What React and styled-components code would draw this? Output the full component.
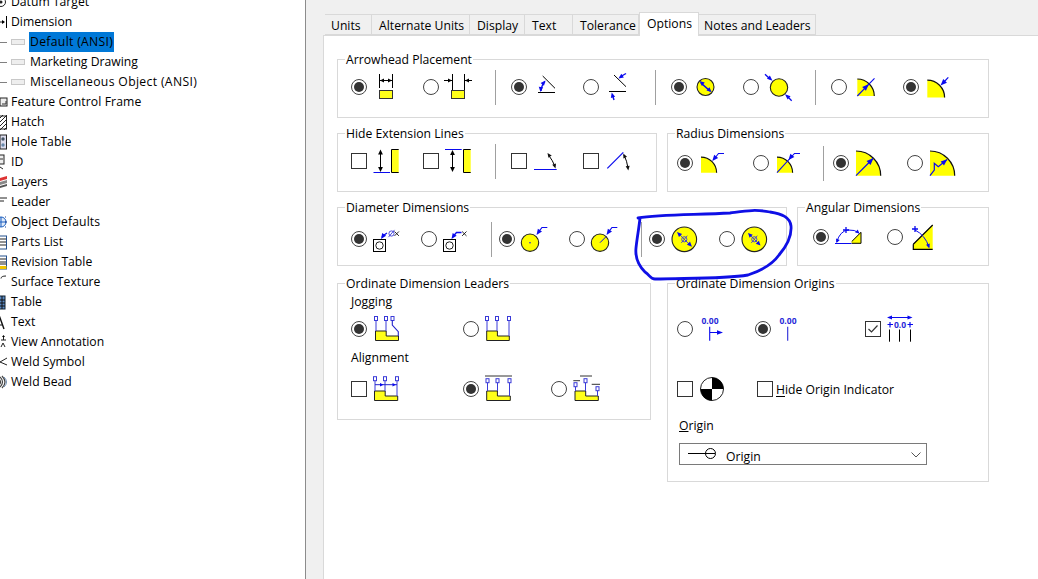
import React from "react"
import styled, { createGlobalStyle } from "styled-components"

const BLUE = "#0a0aee"
const YELLOW = "#ffff1a"

const GlobalStyle = createGlobalStyle`
    html, body {
        margin: 0;
        height: 100%;
        overflow: hidden;
        background: #fff;
    }
    body {
        font-family: "Open Sans", "Liberation Sans", sans-serif;
        font-size: 12.2px;
        color: #000;
    }
`;

const Page = styled.div`
    position: relative;
    display: flex;
    width: 1038px;
    height: 579px;
    overflow: hidden;
`;

/* ---------- left tree ---------- */

const Tree = styled.div`
    width: 305px;
    flex-shrink: 0;
    margin-top: -8px;
    margin-bottom: -8px;
    border-right: 1px solid #8c8c8c;
    box-sizing: content-box;
`;

const TreeRow = styled.div`
    display: flex;
    align-items: center;
    height: 20px;
    white-space: nowrap;
`;

const TreeGlyph = styled.svg`
    width: 8px;
    height: 20px;
    margin-right: 2px;
    flex-shrink: 0;
    overflow: hidden;
`;

const SubDash = styled.span`
    width: 7px;
    height: 1px;
    background: #808080;
    margin-right: 4px;
`;

const SubBox = styled.span`
    width: 14px;
    height: 6px;
    box-sizing: border-box;
    background: #eeeeee;
    border: 1px solid #c8c8c8;
    margin-right: 4px;
`;

const TreeLabel = styled.span`
    height: 20px;
    line-height: 20px;
    padding: 0 1px;
    letter-spacing: ${p => p.$track || 0}px;
    background: ${p => (p.$selected ? "#0078d7" : "transparent")};
`;

const treeIcons = {
    "Datum Target": <><circle cx="1" cy="10" r="4.5" fill="none" stroke="#222" /><circle cx="1" cy="10" r="1.5" fill="#222" /></>,
    Dimension: <><path d="M0 10H4" stroke="#222" /><path d="M2 8L5 10L2 12Z" fill="#000" /><path d="M6.5 4V16" stroke="#000" /></>,
    "Feature Control Frame": <><rect x="0" y="6" width="7" height="8" fill="#eee" stroke="#222" /><path d="M2 12H6V9" stroke="#333" fill="none" /></>,
    Hatch: <><rect x="-1" y="4" width="7.5" height="13" fill="#fff" stroke="#222" /><path d="M-2 8L3 3M-2 12L7 3M-2 16L7 7M0 18L7 11M4 18L7 15" stroke="#222" /></>,
    "Hole Table": <><rect x="0" y="3" width="6.5" height="14" fill="#dde" stroke="#222" /><circle cx="3" cy="7" r="1.7" fill="#456" /><circle cx="3" cy="13" r="1.7" fill="#68a" /></>,
    ID: <><rect x="-1" y="3" width="5" height="9" fill="#eee" stroke="#222" /><path d="M0 15L3 17" stroke="#222" /><path d="M0 7H3" stroke="#333" /></>,
    Layers: <><path d="M0 6L7 4V7L0 9Z" fill="#d33" /><path d="M0 10L7 8V11L0 13Z" fill="#888" /><path d="M0 14L7 12V14L0 16Z" fill="#555" /></>,
    Leader: <><path d="M0 6H7M0 9H4" stroke="#222" /></>,
    "Object Defaults": <><circle cx="1" cy="10" r="5" fill="#dfe9f8" stroke="#1a5fc0" /><path d="M-4 10H6M1 5V15" stroke="#1a5fc0" /><path d="M5.5 4.5V5.5M6 9V11M5.5 14.5V15.5" stroke="#1a3f90" /></>,
    "Parts List": <><rect x="-1" y="4" width="7.5" height="13" fill="#fff" stroke="#24508c" /><path d="M0 7H6M0 10H6M0 13H6" stroke="#222" /></>,
    "Revision Table": <><rect x="-1" y="4" width="7.5" height="13" fill="#fff" stroke="#24508c" /><path d="M0 7H6M0 10H6M0 12H6" stroke="#222" /><rect x="-1" y="14" width="7.5" height="3" fill="#f2c500" /></>,
    "Surface Texture": <><path d="M1 6.5Q1 4 6 4" stroke="#222" fill="none" /></>,
    Table: <><rect x="-1" y="4" width="6" height="13" fill="#5b8ac4" stroke="#123" /><path d="M-1 8H5M-1 11H5M-1 14H5M2 4V17" stroke="#111" /></>,
    Text: <><path d="M-1 3L4 17" stroke="#111" strokeWidth="1.4" /><path d="M-2 13H2" stroke="#111" /></>,
    "View Annotation": <><path d="M1 8H6M3.5 8V4" stroke="#222" /><path d="M2 5L3.5 3L5 5Z" fill="#000" /><path d="M1 15L3 11L5 15" stroke="#222" fill="none" /></>,
    "Weld Symbol": <><path d="M0 10L7 6M0 10L7 13" stroke="#222" /></>,
    "Weld Bead": <><path d="M0 5Q5 10 0 15M2 4Q8 10 2 16M-1 7Q2 10 -1 13" stroke="#444" strokeWidth="1.2" fill="none" /><path d="M4 5Q9 10 4 15" stroke="#6a8ab0" fill="none" /></>,
};

const treeItems = [
    { name: "Datum Target" },
    { name: "Dimension" },
    { name: "Default (ANSI)", sub: true, selected: true, track: 0.32 },
    { name: "Marketing Drawing", sub: true },
    { name: "Miscellaneous Object (ANSI)", sub: true, track: 0.34 },
    { name: "Feature Control Frame", track: 0.1 },
    { name: "Hatch" },
    { name: "Hole Table" },
    { name: "ID" },
    { name: "Layers" },
    { name: "Leader" },
    { name: "Object Defaults", track: 0.12 },
    { name: "Parts List" },
    { name: "Revision Table" },
    { name: "Surface Texture" },
    { name: "Table" },
    { name: "Text" },
    { name: "View Annotation" },
    { name: "Weld Symbol" },
    { name: "Weld Bead" },
];

/* ---------- dialog shell ---------- */

const Dialog = styled.div`
    flex: 1;
    display: flex;
    flex-direction: column;
    background: #f0f0f0;
`;

const TabStrip = styled.div`
    display: flex;
    align-items: flex-end;
    height: 35px;
    padding-left: 19px;
    flex-shrink: 0;
`;

const Tab = styled.div`
    width: ${p => p.$w}px;
    height: ${p => (p.$active ? 24 : 21)}px;
    box-sizing: border-box;
    display: flex;
    align-items: center;
    white-space: nowrap;
    border: 1px solid #d9d9d9;
    border-bottom: ${p => (p.$active ? "none" : "1px solid #d9d9d9")};
    border-left: ${p => (p.$active ? "1px solid #d9d9d9" : "none")};
    background: ${p => (p.$active ? "#fff" : "#f0f0f0")};
    position: relative;
    z-index: ${p => (p.$active ? 1 : 0)};
    margin-bottom: ${p => (p.$active ? -1 : 0)}px;
    padding: ${p => (p.$active ? "0 0 3px" : "1px 0 0")} ${p => p.$pad}px;
    padding-right: 0;
`;

const Panel = styled.div`
    flex: 1;
    margin-left: 17px;
    background: #fff;
    border-top: 1px solid #d9d9d9;
    border-left: 1px solid #d9d9d9;
    padding: 23px 0 0 13px;
    display: flex;
    flex-direction: column;
    gap: 15px;
`;

const GroupRow = styled.div`
    display: flex;
    align-items: flex-start;
    gap: ${p => p.$gap || 10}px;
    margin-top: ${p => p.$mt || 0}px;
`;

const Group = styled.div`
    position: relative;
    box-sizing: border-box;
    width: ${p => p.$w}px;
    height: ${p => p.$h || 59}px;
    border: 1px solid #d9d9d9;
    padding: ${p => p.$pt}px 0 0 ${p => p.$pl}px;
`;

const Legend = styled.span`
    position: absolute;
    top: -8px;
    left: 7px;
    padding: 0 1px;
    line-height: 16px;
    background: #fff;
    white-space: nowrap;
`;

const Row = styled.div`
    display: flex;
    align-items: center;
    height: 20px;
    margin-top: ${p => p.$mt || 0}px;
`;

const Option = styled.div`
    display: flex;
    align-items: center;
    width: ${p => p.$w}px;
    height: 20px;
    flex-shrink: 0;
`;

const Divider = styled.span`
    width: 1px;
    height: 35px;
    background: #a0a0a0;
    margin-right: ${p => p.$mr}px;
    flex-shrink: 0;
`;

const Radio = styled.span`
    position: relative;
    width: 16px;
    height: 16px;
    box-sizing: border-box;
    flex-shrink: 0;
    border-radius: 50%;
    border: 1px solid #444;
    background: #fff;
    &::after {
        content: "";
        display: ${p => (p.$on ? "block" : "none")};
        position: absolute;
        inset: 2px;
        border-radius: 50%;
        background: #333;
    }
`;

const Box = styled.span`
    display: flex;
    width: 16px;
    height: 16px;
    box-sizing: border-box;
    flex-shrink: 0;
    border: 1px solid #333;
    background: #fff;
`;

const Tick = styled.svg`
    width: 14px;
    height: 14px;
`;

const Glyph = styled.svg`
    width: 50px;
    height: 40px;
    margin-left: 4px;
    flex-shrink: 0;
    overflow: visible;
`;

const SubLabel = styled.div`
    line-height: 16px;
    margin-top: ${p => p.$mt || 0}px;
`;

const HideLabel = styled.span`
    margin-left: 3px;
    white-space: nowrap;
    & u {
        text-underline-offset: 2px;
    }
`;

const OriginLabel = styled.div`
    line-height: 16px;
    margin: 19px 0 0 2px;
`;

const Combo = styled.div`
    display: flex;
    align-items: flex-start;
    width: 248px;
    height: 22px;
    box-sizing: border-box;
    margin: 9px 0 0 2px;
    border: 1px solid #7a7a7a;
    overflow: hidden;
    position: relative;
`;

const ComboIcon = styled.svg`
    width: 30px;
    height: 20px;
    margin-left: 8px;
    flex-shrink: 0;
`;

const ComboText = styled.span`
    margin-left: 8px;
    line-height: 20px;
    padding-top: 3px;
`;

const Caret = styled.svg`
    width: 10px;
    height: 6px;
    margin: 8px 5px 0 auto;
    flex-shrink: 0;
`;

const Scribble = styled.svg`
    position: absolute;
    left: 0;
    top: 0;
    width: 1038px;
    height: 579px;
    pointer-events: none;
    z-index: 2;
`;

/* ---------- drawing helpers, coordinates are page pixels ---------- */

const Icon = ({ cx, cy, children }) => (
    <Glyph viewBox={`${cx + 12} ${cy - 20} 50 40`}>{children}</Glyph>
);

const Head = ({ x, y, a, c = BLUE, l = 5, w = 2.2 }) => (
    <polygon
        points={`0,0 ${-l},${-w} ${-l},${w}`}
        fill={c}
        transform={`translate(${x} ${y}) rotate(${a})`}
    />
);

const Ln = ({ d, c = "#000", w = 1 }) => <path d={d} stroke={c} strokeWidth={w} fill="none" />;

const Quarter = ({ x, y, r }) => (
    <>
        <path d={`M${x} ${y - r}A${r} ${r} 0 0 1 ${x + r} ${y}H${x}Z`} fill="#ffff00" />
        <path d={`M${x} ${y - r}A${r} ${r} 0 0 1 ${x + r} ${y}`} stroke="#111" strokeWidth="1.2" fill="none" />
    </>
);

const Disc = ({ x, y, r }) => <circle cx={x} cy={y} r={r} fill="#ffff00" stroke="#222" strokeWidth="1.1" />;

const Step = ({ x, y, w, s = 10.7 }) => (
    <path
        d={`M${x} ${y}H${x + s}V${y + 5}H${x + w}V${y + 9.5}H${x}Z`}
        fill={YELLOW}
        stroke="#222"
        strokeWidth="1"
    />
);

const Stem = ({ x, top, bottom }) => (
    <>
        <rect x={x - 1.5} y={top} width="3" height="4" fill="#fff" stroke="#3a3ad8" />
        <Ln d={`M${x} ${top + 4}V${bottom}`} c="#3a3ad8" />
    </>
);

const OrdText = ({ x, y, children, c = "#2a2ad8" }) => (
    <text x={x} y={y} fill={c} fontFamily="'Open Sans', sans-serif" fontSize="8.5" fontWeight="700">
        {children}
    </text>
);

const Slashed = ({ x, y }) => (
    <>
        <circle cx={x} cy={y} r="2.6" fill="none" stroke="#3a3ad8" strokeWidth=".9" />
        <Ln d={`M${x - 3} ${y + 3.6}L${x + 3} ${y - 3.6}`} c="#3a3ad8" w=".9" />
    </>
);

const Cross = ({ x, y }) => <Ln d={`M${x - 2.2} ${y - 2.2}L${x + 2.2} ${y + 2.2}M${x + 2.2} ${y - 2.2}L${x - 2.2} ${y + 2.2}`} c="#111" w=".9" />;

const tabs = [
    ["Units", 47, 6], ["Alternate Units", 98, 7], ["Display", 55, 7], ["Text", 48, 7],
    ["Tolerance", 66, 7], ["Options", 60, 7, true], ["Notes and Leaders", 117, 5],
];

const App = () => {
    return (
        <Page>
            <GlobalStyle />
            <Tree>
                {treeItems.map(item => (
                    <TreeRow key={item.name}>
                        {item.sub ? (
                            <>
                                <SubDash />
                                <SubBox />
                            </>
                        ) : (
                            <TreeGlyph viewBox="0 0 8 20">{treeIcons[item.name]}</TreeGlyph>
                        )}
                        <TreeLabel $selected={item.selected} $track={item.track}>{item.name}</TreeLabel>
                    </TreeRow>
                ))}
            </Tree>
            <Dialog>
                <TabStrip>
                    {tabs.map(([name, w, pad, active]) => (
                        <Tab key={name} $w={w} $pad={pad} $active={active}>{name}</Tab>
                    ))}
                </TabStrip>
                <Panel>
                    <Group $w={652} $pt={17} $pl={13}>
                        <Legend>Arrowhead Placement</Legend>
                        <Row>
                            <Option $w={72}>
                                <Radio $on />
                                <Icon cx={359} cy={87}>
                                    <Ln d="M379.5 74V88M392.5 74V88M380 80.5H392" />
                                    <Head x={380} y={80.5} a={180} c="#000" l={4} w={2} />
                                    <Head x={392} y={80.5} a={0} c="#000" l={4} w={2} />
                                    <rect x="379.5" y="90.5" width="13" height="8" fill={YELLOW} stroke="#333" />
                                </Icon>
                            </Option>
                            <Option $w={72}>
                                <Radio />
                                <Icon cx={431} cy={87}>
                                    <Ln d="M452.5 74V90M464.5 74V90M444 80.5H452M465 80.5H472" />
                                    <Head x={452} y={80.5} a={0} c="#000" l={4} w={2} />
                                    <Head x={465} y={80.5} a={180} c="#000" l={4} w={2} />
                                    <rect x="451.5" y="90.5" width="13" height="8" fill={YELLOW} stroke="#333" />
                                </Icon>
                            </Option>
                            <Divider $mr={15} />
                            <Option $w={72}>
                                <Radio $on />
                                <Icon cx={519} cy={87}>
                                    <Ln d="M538 92.5H555M542.7 76L555 88.3" />
                                    <Ln d="M541 91Q541.5 85 545 81.5" c={BLUE} w={1.4} />
                                    <Head x={540.5} y={92} a={95} l={5} />
                                    <Head x={545.5} y={80.5} a={-50} l={5} />
                                </Icon>
                            </Option>
                            <Option $w={72}>
                                <Radio />
                                <Icon cx={591} cy={87}>
                                    <Ln d="M609 91.5H626M614 75L626 86.7" />
                                    <Ln d="M626 73.5L620 77" c={BLUE} w={1.4} />
                                    <Ln d="M614 100L612.5 95" c={BLUE} w={1.4} />
                                    <Head x={618.5} y={78.5} a={145} l={5} />
                                    <Head x={611.7} y={92.5} a={-105} l={5} />
                                </Icon>
                            </Option>
                            <Divider $mr={15} />
                            <Option $w={72}>
                                <Radio $on />
                                <Icon cx={679} cy={87}>
                                    <Disc x={705.5} y={87} r={8.5} />
                                    <Ln d="M701 83L710 91" c={BLUE} w={1.6} />
                                    <Head x={699.5} y={81} a={220} l={5} />
                                    <Head x={711.7} y={92.3} a={42} l={5} />
                                </Icon>
                            </Option>
                            <Option $w={72}>
                                <Radio />
                                <Icon cx={751} cy={87}>
                                    <Disc x={779} y={87.5} r={8.7} />
                                    <Ln d="M765 74.3L770 79M791.7 100.7L787 96" c={BLUE} w={1.3} />
                                    <Head x={772.5} y={80.8} a={42} l={5.5} />
                                    <Head x={785} y={94.3} a={222} l={5.5} />
                                </Icon>
                            </Option>
                            <Divider $mr={15} />
                            <Option $w={72}>
                                <Radio />
                                <Icon cx={839} cy={87}>
                                    <Quarter x={857.3} y={96} r={17} />
                                    <Ln d="M857.3 96L874.5 78.3" c={BLUE} w={1.1} />
                                    <Head x={869} y={84} a={-45} l={7} w={2.6} />
                                </Icon>
                            </Option>
                            <Option $w={72}>
                                <Radio $on />
                                <Icon cx={911} cy={87}>
                                    <Quarter x={927.3} y={97.5} r={17.3} />
                                    <Ln d="M948.3 77.3L943 83" c={BLUE} w={1.2} />
                                    <Head x={940.5} y={85.5} a={135} l={6.5} w={2.6} />
                                </Icon>
                            </Option>
                        </Row>
                    </Group>

                    <GroupRow>
                        <Group $w={320} $pt={17} $pl={13}>
                            <Legend>Hide Extension Lines</Legend>
                            <Row>
                                <Option $w={72}>
                                    <Box />
                                    <Icon cx={359} cy={161}>
                                        <Ln d="M373.5 172.5H390" c={BLUE} />
                                        <Ln d="M380.5 151V171" />
                                        <Head x={380.5} y={149.5} a={-90} c="#000" l={5} w={2.4} />
                                        <Head x={380.5} y={172} a={90} c="#000" l={5} w={2.4} />
                                        <path d="M398.7 149.5H391.5V172.5H398.7Z" fill={YELLOW} />
                                        <Ln d="M398.7 149.5H391.5V172.5H398.7" />
                                    </Icon>
                                </Option>
                                <Option $w={72}>
                                    <Box />
                                    <Icon cx={431} cy={161}>
                                        <Ln d="M445 149.5H461.7" c={BLUE} />
                                        <Ln d="M452.5 151V171" />
                                        <Head x={452.5} y={150} a={-90} c="#000" l={5} w={2.4} />
                                        <Head x={452.5} y={172} a={90} c="#000" l={5} w={2.4} />
                                        <path d="M470.7 149.5H463.5V172.5H470.7Z" fill={YELLOW} />
                                        <Ln d="M470.7 149.5H463.5V172.5H470.7" />
                                    </Icon>
                                </Option>
                                <Divider $mr={15} />
                                <Option $w={72}>
                                    <Box />
                                    <Icon cx={519} cy={161}>
                                        <Ln d="M534 169.5H556.7" c={BLUE} />
                                        <Ln d="M548.5 155Q553 161 554.8 166" />
                                        <Head x={547.5} y={153} a={-125} c="#111" l={4.5} w={2} />
                                        <Head x={555.5} y={168.5} a={72} c="#111" l={4.5} w={2} />
                                    </Icon>
                                </Option>
                                <Option $w={72}>
                                    <Box />
                                    <Icon cx={591} cy={161}>
                                        <Ln d="M607.3 168.3L623.3 152.3" c={BLUE} w={1.2} />
                                        <Ln d="M624 155Q627 161 628 168" />
                                        <Head x={623.3} y={153.5} a={-115} c="#111" l={4.5} w={2} />
                                        <Head x={628.3} y={170.5} a={82} c="#111" l={4.5} w={2} />
                                    </Icon>
                                </Option>
                            </Row>
                        </Group>
                        <Group $w={322} $pt={19} $pl={9}>
                            <Legend>Radius Dimensions</Legend>
                            <Row>
                                <Option $w={76}>
                                    <Radio $on />
                                    <Icon cx={685} cy={163}>
                                        <Quarter x={701} y={172.7} r={15.6} />
                                        <Ln d="M724 153.5H718.5L714.5 158.5" c={BLUE} w={1.1} />
                                        <Head x={712.3} y={161} a={130} l={6} w={2.6} />
                                    </Icon>
                                </Option>
                                <Option $w={70}>
                                    <Radio />
                                    <Icon cx={761} cy={163}>
                                        <Quarter x={777} y={172.7} r={15.6} />
                                        <Ln d="M800 153.5H794.5L777 172.7" c={BLUE} w={1.1} />
                                        <Head x={788.5} y={160} a={130} l={6} w={2.6} />
                                    </Icon>
                                </Option>
                                <Divider $mr={9} />
                                <Option $w={74}>
                                    <Radio $on />
                                    <Icon cx={841} cy={163}>
                                        <Quarter x={856} y={175.7} r={24.7} />
                                        <Ln d="M856 175.7L873 158.5" c={BLUE} w={1.2} />
                                        <Head x={873.5} y={158} a={-45} l={7} w={2.8} />
                                    </Icon>
                                </Option>
                                <Option $w={70}>
                                    <Radio />
                                    <Icon cx={915} cy={163}>
                                        <Quarter x={930} y={175.7} r={24.7} />
                                        <Ln d="M930 175.7L934.3 170V163.3L938.3 166.7L947 159.5" c={BLUE} w={1.2} />
                                        <Head x={947.3} y={159.3} a={-40} l={6.5} w={2.6} />
                                    </Icon>
                                </Option>
                            </Row>
                        </Group>
                    </GroupRow>

                    <GroupRow>
                        <Group $w={450} $pt={21} $pl={13}>
                            <Legend>Diameter Dimensions</Legend>
                            <Row>
                                <Option $w={70}>
                                    <Radio $on />
                                    <Icon cx={359} cy={239}>
                                        <rect x="373.5" y="239.5" width="12" height="12" fill="#fff" stroke="#000" />
                                        <circle cx="379.5" cy="245.5" r="3.7" fill="#fff" stroke="#222" />
                                        <Ln d="M387 233Q383.5 235 382 237" c={BLUE} w={1.3} />
                                        <Head x={381} y={239} a={125} l={5.5} w={2.4} />
                                        <Slashed x={391.5} y={233.5} />
                                        <Cross x={396.7} y={233.7} />
                                    </Icon>
                                </Option>
                                <Option $w={70}>
                                    <Radio />
                                    <Icon cx={429} cy={239}>
                                        <rect x="443.5" y="239.5" width="12" height="12" fill="#fff" stroke="#000" />
                                        <circle cx="449.5" cy="245.5" r="3.7" fill="#fff" stroke="#222" />
                                        <Ln d="M461.5 232.5H456.5L453 236.5" c={BLUE} w={1.3} />
                                        <Head x={451.5} y={239} a={125} l={5.5} w={2.4} />
                                        <Cross x={464.3} y={233.7} />
                                    </Icon>
                                </Option>
                                <Divider $mr={7} />
                                <Option $w={70}>
                                    <Radio $on />
                                    <Icon cx={507} cy={239}>
                                        <Disc x={530} y={242.7} r={8.7} />
                                        <circle cx="530" cy="242.7" r=".8" fill={BLUE} />
                                        <Ln d="M547.3 227.5H542L538.5 232" c={BLUE} w={1.2} />
                                        <Head x={536.5} y={235} a={125} l={6} w={2.5} />
                                    </Icon>
                                </Option>
                                <Option $w={72}>
                                    <Radio />
                                    <Icon cx={577} cy={239}>
                                        <Disc x={600} y={242.7} r={8.7} />
                                        <Ln d="M600 242.7L606 236.7" c={BLUE} />
                                        <Ln d="M617.3 227.5H612L608.5 232" c={BLUE} w={1.2} />
                                        <Head x={606.5} y={235} a={125} l={6} w={2.5} />
                                    </Icon>
                                </Option>
                                <Divider $mr={7} />
                                <Option $w={70}>
                                    <Radio $on />
                                    <Icon cx={657} cy={239}>
                                        <Disc x={684.3} y={239.3} r={12.3} />
                                        <Ln d="M679 234L690 245" c="#3a3ad8" w={.9} />
                                        <Head x={677} y={232} a={225} l={5} />
                                        <Head x={692} y={246.7} a={45} l={5} />
                                        <Slashed x={684.3} y={239.3} />
                                    </Icon>
                                </Option>
                                <Option $w={60}>
                                    <Radio />
                                    <Icon cx={727} cy={239}>
                                        <Disc x={754.3} y={239.3} r={12.3} />
                                        <Ln d="M750 235L759 244" c="#3a3ad8" w={.9} />
                                        <Head x={748} y={233} a={225} l={4.5} />
                                        <Head x={760.5} y={245.5} a={45} l={4.5} />
                                        <Slashed x={754.3} y={239.3} />
                                    </Icon>
                                </Option>
                            </Row>
                        </Group>
                        <Group $w={192} $pt={19} $pl={15}>
                            <Legend>Angular Dimensions</Legend>
                            <Row>
                                <Option $w={74}>
                                    <Radio $on />
                                    <Icon cx={821} cy={237}>
                                        <path d="M851.7 243.3H861V232.3L851.7 241.6Z" fill="#ffff00" />
                                        <Ln d="M851.7 241.6L861 232.3V243.3H851.7" />
                                        <Ln d="M835 243.5H851.5" c={BLUE} />
                                        <Ln d="M836.7 242Q840 231 848 230Q855 229.5 859 233" c={BLUE} />
                                        <Ln d="M846 227V233M843 230H849" c={BLUE} w={1.3} />
                                        <Head x={836.5} y={243} a={110} l={4} w={2} />
                                        <Head x={859.5} y={233.5} a={40} l={4} w={2} />
                                    </Icon>
                                </Option>
                                <Option $w={74}>
                                    <Radio />
                                    <Icon cx={895} cy={237}>
                                        <path d="M913.3 249.3H932.7V225L913.3 244.3Z" fill="#ffff00" />
                                        <Ln d="M913.3 244.3L932.7 225M932.7 249.3H913.3V244.3" w={1.2} />
                                        <Ln d="M915 230Q925 235 929 247" c={BLUE} />
                                        <Ln d="M915 226V232M912 229H918" c={BLUE} w={1.3} />
                                        <Head x={929.3} y={248.5} a={72} l={4.5} w={2} />
                                    </Icon>
                                </Option>
                            </Row>
                        </Group>
                    </GroupRow>

                    <GroupRow $gap={16} $mt={2}>
                        <Group $w={314} $h={137} $pt={10} $pl={13}>
                            <Legend>Ordinate Dimension Leaders</Legend>
                            <SubLabel>Jogging</SubLabel>
                            <Row $mt={9}>
                                <Option $w={112}>
                                    <Radio $on />
                                    <Icon cx={359} cy={329}>
                                        <Step x={375.5} y={331} w={23} />
                                        <Stem x={376} top={316.5} bottom={331} />
                                        <Stem x={386} top={316.5} bottom={331} />
                                        <rect x="391" y="316.5" width="3" height="4" fill="#fff" stroke="#3a3ad8" />
                                        <Ln d="M392.3 320.5V325L398.3 331.7V336" c="#2222cc" w={1.1} />
                                    </Icon>
                                </Option>
                                <Option $w={112}>
                                    <Radio />
                                    <Icon cx={471} cy={329}>
                                        <Step x={486.7} y={331} w={22.6} />
                                        <Stem x={487} top={316.5} bottom={331} />
                                        <Stem x={497} top={316.5} bottom={331} />
                                        <Stem x={509} top={316.5} bottom={336} />
                                    </Icon>
                                </Option>
                            </Row>
                            <SubLabel $mt={11}>Alignment</SubLabel>
                            <Row $mt={13}>
                                <Option $w={112}>
                                    <Box />
                                    <Icon cx={359} cy={389}>
                                        <Step x={374.5} y={391} w={23.2} />
                                        <Stem x={375} top={376.7} bottom={391} />
                                        <Stem x={385} top={376.7} bottom={391} />
                                        <Stem x={397} top={376.7} bottom={396} />
                                        <Ln d="M375 384.7H397" c="#2222cc" />
                                        <Head x={383.5} y={384.7} a={0} l={3.5} w={1.7} />
                                        <Head x={396} y={384.7} a={0} l={3.5} w={1.7} />
                                    </Icon>
                                </Option>
                                <Option $w={88}>
                                    <Radio $on />
                                    <Icon cx={471} cy={389}>
                                        <Step x={486.7} y={391} w={23.6} />
                                        <Ln d="M485 376H512" c="#333" />
                                        <Stem x={487.5} top={378.7} bottom={391} />
                                        <Stem x={497.5} top={378.7} bottom={391} />
                                        <Stem x={509.5} top={378.7} bottom={396} />
                                    </Icon>
                                </Option>
                                <Option $w={70}>
                                    <Radio />
                                    <Icon cx={559} cy={389}>
                                        <Step x={575} y={391} w={23.3} />
                                        <Ln d="M573.3 380.7H580M580 376H592M591.7 384.3H600" c="#333" />
                                        <Stem x={575.5} top={382.7} bottom={391} />
                                        <Stem x={585.5} top={378.7} bottom={391} />
                                        <Stem x={597.5} top={386.7} bottom={396} />
                                    </Icon>
                                </Option>
                            </Row>
                        </Group>
                        <Group $w={322} $h={199} $pt={35} $pl={9}>
                            <Legend>Ordinate Dimension Origins</Legend>
                            <Row>
                                <Option $w={78}>
                                    <Radio />
                                    <Icon cx={685} cy={329}>
                                        <OrdText x={701.5} y={324}>0.00</OrdText>
                                        <Ln d="M709.7 326.7V340.7M710 332.5H718" c={BLUE} w={1.1} />
                                        <Head x={723} y={332.5} a={0} l={6} w={2.2} />
                                    </Icon>
                                </Option>
                                <Option $w={110}>
                                    <Radio $on />
                                    <Icon cx={763} cy={329}>
                                        <OrdText x={779.5} y={324}>0.00</OrdText>
                                        <Ln d="M787.7 326.7V340.7" c="#2a2ad8" w={1.1} />
                                    </Icon>
                                </Option>
                                <Option $w={70}>
                                    <Box>
                                        <Tick viewBox="0 0 14 14">
                                            <path d="M2.5 7L5.5 10L11.5 3.5" stroke="#333" strokeWidth="1.2" fill="none" />
                                        </Tick>
                                    </Box>
                                    <Icon cx={873} cy={329}>
                                        <Ln d="M890 317.5H910" c={BLUE} />
                                        <Head x={887} y={317.5} a={180} l={5} w={2} />
                                        <Head x={912.5} y={317.5} a={0} l={5} w={2} />
                                        <Ln d="M887.5 324.5H893M890 322V327.5M907.5 324.5H913M910 322V327.5" c={BLUE} w={1.2} />
                                        <OrdText x={894} y={327.5}>0.0</OrdText>
                                        <Ln d="M889.5 329.5V341.7M899.5 329.5V341.7M910.5 329.5V341.7" />
                                    </Icon>
                                </Option>
                            </Row>
                            <Row $mt={40}>
                                <Option $w={80}>
                                    <Box />
                                    <Icon cx={685} cy={389}>
                                        <circle cx="712" cy="389" r="11.5" fill="#fff" stroke="#222" />
                                        <path d="M712 389V377.5A11.5 11.5 0 0 1 723.5 389Z" fill="#000" />
                                        <path d="M712 389V400.5A11.5 11.5 0 0 1 700.5 389Z" fill="#000" />
                                    </Icon>
                                </Option>
                                <Option $w={200}>
                                    <Box />
                                    <HideLabel><u>H</u>ide Origin Indicator</HideLabel>
                                </Option>
                            </Row>
                            <OriginLabel><u>O</u>rigin</OriginLabel>
                            <Combo>
                                <ComboIcon viewBox="0 0 30 20">
                                    <path d="M0 9.5H27" stroke="#000" fill="none" />
                                    <circle cx="22.5" cy="9.5" r="5" fill="none" stroke="#000" />
                                </ComboIcon>
                                <ComboText>Origin</ComboText>
                                <Caret viewBox="0 0 10 6">
                                    <path d="M.5 .5L5 5L9.5 .5" stroke="#555" fill="none" />
                                </Caret>
                            </Combo>
                        </Group>
                    </GroupRow>
                </Panel>
            </Dialog>
            <Scribble viewBox="0 0 1038 579">
                <path
                    d="M638 218C660 214 700 215 730 213C745 211 755 209 770 212C782 214 790 217 791 226C792 238 785 248 779 255C772 265 760 271 748 275C725 279 690 278 655 279C650 279 650 275 645 272C638 265 635 258 636 248C637 238 639 228 640 218"
                    stroke="#0f0fe6"
                    strokeWidth="2.8"
                    fill="none"
                    strokeLinecap="round"
                />
            </Scribble>
        </Page>
    )
}

export default App;
